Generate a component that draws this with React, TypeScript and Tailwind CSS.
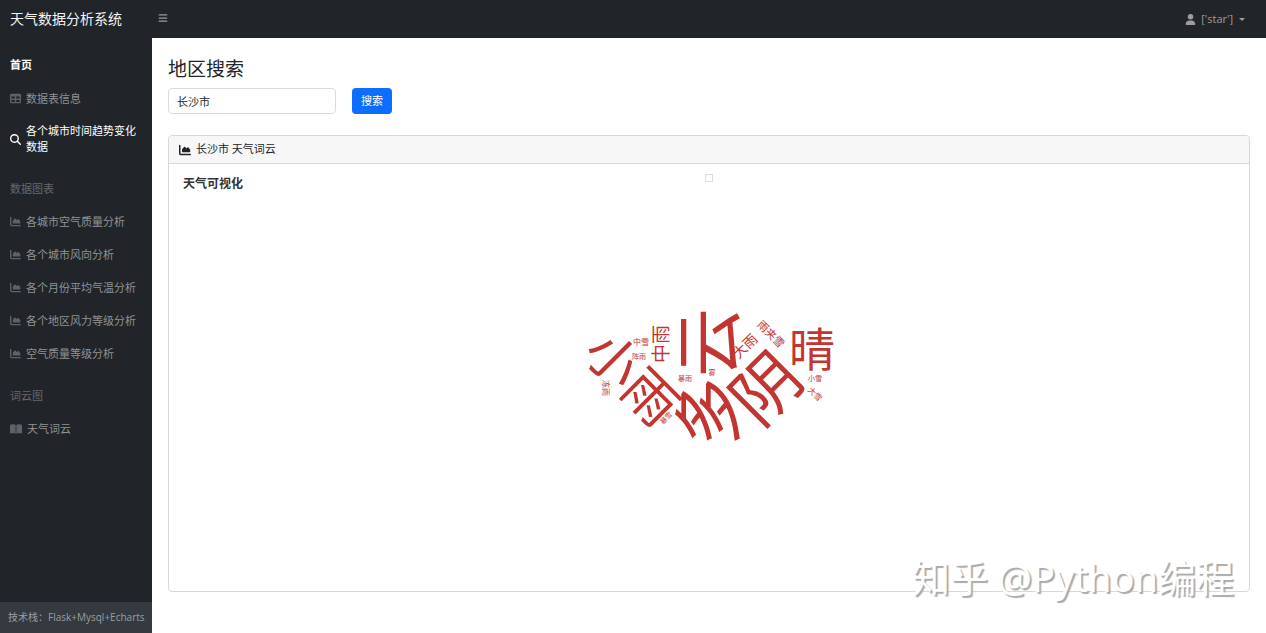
import type { ReactNode } from "react";
import {
  FaBars,
  FaBookOpen,
  FaChartArea,
  FaMagnifyingGlass,
  FaTable,
  FaUser,
} from "react-icons/fa6";

type Word = {
  text: string;
  x: number;
  y: number;
  size: number;
  rotate: number;
};

const charts: string[] = [
  "各城市空气质量分析",
  "各个城市风向分析",
  "各个月份平均气温分析",
  "各个地区风力等级分析",
  "空气质量等级分析",
];

const words: Word[] = [
  { text: "多云", x: 129, y: 77, size: 69, rotate: -90 },
  { text: "阴", x: 187, y: 88, size: 67, rotate: -45 },
  { text: "小雨", x: 53, y: 78, size: 53, rotate: 45 },
  { text: "晴", x: 233, y: 49, size: 46, rotate: 0 },
  { text: "中雨", x: 82, y: 44, size: 19, rotate: -90 },
  { text: "大雨", x: 166, y: 46, size: 14, rotate: -45 },
  { text: "雨夹雪", x: 192, y: 34, size: 11, rotate: 45 },
  { text: "中雪", x: 62, y: 42, size: 8, rotate: 0 },
  { text: "阵雨", x: 60, y: 56, size: 7, rotate: 0 },
  { text: "冻雨", x: 27, y: 88, size: 8, rotate: 90 },
  { text: "暴雪", x: 87, y: 118, size: 7, rotate: -45 },
  { text: "暴雨", x: 106, y: 78, size: 7, rotate: 0 },
  { text: "雾", x: 133, y: 72, size: 7, rotate: 0 },
  { text: "小雪", x: 236, y: 78, size: 7, rotate: 0 },
  { text: "大雪", x: 236, y: 94, size: 8, rotate: 45 },
];

function NavItem({
  icon,
  active,
  children,
}: {
  icon: ReactNode;
  active?: boolean;
  children: ReactNode;
}) {
  return (
    <a
      href="#"
      className={
        active
          ? "flex items-center gap-[5px] px-[10px] py-2 leading-4 text-white"
          : "flex h-[33px] items-center gap-[5px] px-[10px] leading-4 text-[#909294]"
      }
    >
      <span className={active ? "text-white" : "text-[#5f6265]"}>{icon}</span>
      <span>{children}</span>
    </a>
  );
}

function NavHeading({ children }: { children: ReactNode }) {
  return (
    <h2 className="px-[10px] pt-[18px] pb-2 leading-4 text-[#66696c]">
      {children}
    </h2>
  );
}

function WordCloud() {
  return (
    <svg
      width="260"
      height="150"
      viewBox="0 0 260 150"
      className="overflow-visible"
      fill="#c23531"
      fontFamily="'Noto Sans CJK SC', sans-serif"
    >
      {words.map((word) => (
        <text
          key={word.text}
          transform={`translate(${word.x} ${word.y}) rotate(${word.rotate})`}
          y={word.size * 0.37}
          fontSize={word.size}
          textAnchor="middle"
        >
          {word.text}
        </text>
      ))}
    </svg>
  );
}

export default function App() {
  return (
    <div className="relative flex min-h-screen flex-col bg-white font-['Open_Sans','Noto_Sans_CJK_SC',sans-serif] text-[11px] text-[#212529]">
      {/* Top bar */}
      <header className="flex h-[38px] items-center bg-[#212529] text-[#9b9d9f]">
        <a href="#" className="w-[152px] pb-px pl-[10px] text-[14px] text-[#f4f4f4]">
          天气数据分析系统
        </a>
        <button aria-label="菜单" className="ml-[5px] p-px pb-[3px]">
          <FaBars size={10} />
        </button>
        <button className="mr-[21px] ml-auto flex items-center gap-[5px]">
          <FaUser size={11} />
          ['star']
          <span className="ml-px border-x-[3px] border-t-[3px] border-x-transparent" />
        </button>
      </header>

      <div className="flex flex-1">
        {/* Sidebar */}
        <aside className="flex w-[152px] shrink-0 flex-col bg-[#212529]">
          <nav className="flex-1 pt-[11px]">
            <a
              href="#"
              className="flex h-[33px] items-center px-[10px] font-bold text-white"
            >
              首页
            </a>
            <NavItem icon={<FaTable size={11} />}>数据表信息</NavItem>
            <NavItem icon={<FaMagnifyingGlass size={11} />} active>
              各个城市时间趋势变化数据
            </NavItem>

            <NavHeading>数据图表</NavHeading>
            {charts.map((chart) => (
              <NavItem key={chart} icon={<FaChartArea size={11} />}>
                {chart}
              </NavItem>
            ))}

            <NavHeading>词云图</NavHeading>
            <NavItem icon={<FaBookOpen size={12} />}>天气词云</NavItem>
          </nav>

          <footer className="flex h-[31px] items-center bg-[#343a40] pl-2 text-[10px] whitespace-nowrap text-[#9b9ea1]">
            技术栈：Flask+Mysql+Echarts
          </footer>
        </aside>

        {/* Content */}
        <main className="flex flex-1 flex-col px-4 pt-[19px] pb-[41px]">
          <h1 className="text-[19px] leading-6">地区搜索</h1>

          <form className="mt-[7px] flex gap-4">
            <input
              type="text"
              aria-label="地区"
              defaultValue="长沙市"
              className="h-[26px] w-[168px] rounded border border-[#d8dce0] px-2"
            />
            <button
              type="button"
              className="h-[26px] w-10 rounded bg-[#0d6efd] text-white"
            >
              搜索
            </button>
          </form>

          <section className="mt-[21px] flex flex-1 flex-col rounded border border-[#d8d8d8]">
            <div className="flex h-7 items-center gap-[5px] rounded-t border-b border-[#d8d8d8] bg-[#f7f7f7] px-[10px]">
              <FaChartArea size={12} />
              长沙市 天气词云
            </div>

            <div className="relative flex flex-1 justify-center pt-[136px]">
              <h3 className="absolute top-3 left-[14px] text-[12px] leading-4 font-bold text-[#333]">
                天气可视化
              </h3>
              <span className="absolute top-[10px] left-1/2 size-2 -translate-x-1/2 border border-[#ddd]" />
              <WordCloud />
            </div>
          </section>
        </main>
      </div>

      {/* Watermark */}
      <p className="pointer-events-none absolute right-8 bottom-[30px] font-['Noto_Sans','Noto_Sans_CJK_SC',sans-serif] text-[38px] leading-[52px] whitespace-nowrap text-white [text-shadow:2px_2px_1px_#aaa]">
        知乎 @Python编程
      </p>
    </div>
  );
}
